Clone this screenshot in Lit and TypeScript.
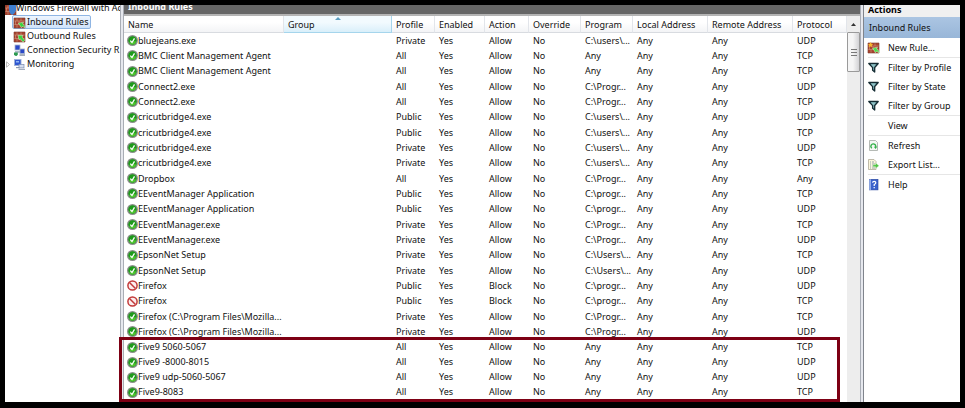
import { LitElement, html, css, svg, nothing } from "lit";
import { customElement, property } from "lit/decorators.js";
import { classMap } from "lit/directives/class-map.js";

const wall = svg`
  <rect x="0" y="1" width="11" height="10" fill="#a8432f"/>
  <path d="M0 4h11M0 7.5h11M3 1v3M7 1v3M1.500 4v3.500M5 4v3.500M3 7.500v3.500M7 7.500v3.500" stroke="#d09a80" stroke-width=".6" fill="none"/>
  <path d="M0 1h11v10H0z" fill="none" stroke="#7c3a2c" stroke-width=".6"/>`;

const funnel = svg`
  <path d="M.8 1.500h9.400L6.700 5.500v4.500L4.600 8.300V5.500z" fill="#7fb3b8" stroke="#152c33" stroke-width="1.300" stroke-linejoin="round"/>
  <path d="M3 2.500h4.500L5.300 5.300z" fill="#8fc3c7"/>`;

const icons = {
  allow: svg`
    <circle cx="5.500" cy="5.500" r="5.500" fill="#8b8f8b"/>
    <circle cx="5.500" cy="5.500" r="4.200" fill="#1d9a1a"/>
    <path d="M2 7.200A4 4 0 0 0 9.400 6.500Q6 5.500 2 7.200z" fill="#4cc42e"/>
    <path d="M3.300 5.600L5 7.500L7.500 3.300" stroke="#fff" stroke-width="1.300" fill="none"/>`,
  block: svg`
    <circle cx="5.500" cy="5.500" r="4.600" fill="#fbeeee" stroke="#c23a3a" stroke-width="1.500"/>
    <path d="M2.500 2.500l6 6" stroke="#c23a3a" stroke-width="1.500"/>`,
  firewall: svg`${wall}<path d="M4 1h7v5q-1 4-4 5q-3-2-3-5z" fill="#3f7fd0"/>`,
  inbound: svg`${wall}<path d="M10.600 11L8.800 9.200L7.600 10.600L4.300 6.200L9.500 5.200L8.600 7L10.800 9z" fill="#38d43c" stroke="#d9f7d3" stroke-width=".5"/>`,
  outbound: svg`${wall}<path d="M4 4.200L9 4.500L8 6L10.800 9.400L9 11L6.300 7.800L5 9z" fill="#38d43c" stroke="#d9f7d3" stroke-width=".5"/>`,
  newRule: svg`${wall}
    <path d="M2.500 0l.8 1.700 1.900.3-1.400 1.300.3 1.900-1.600-.9-1.700.9.300-1.900L0 2l1.800-.3z" fill="#f7b52c"/>
    <path d="M10.800 11L8.800 9.200L7.600 10.600L4.600 6.200L9.500 5.200L8.600 7L10.900 9z" fill="#4be04a" stroke="#d9f7d3" stroke-width=".5"/>`,
  connection: svg`
    <rect x="1" y="0" width="5" height="5" fill="#2a49c8" stroke="#a9b5cc" stroke-width=".8"/>
    <path d="M1 6.200h5v1.500H1z" fill="#9aa6b8"/>
    <rect x="6" y="4" width="4.600" height="4.600" fill="#2a49c8" stroke="#a9b5cc" stroke-width=".8"/>
    <path d="M5.500 9.300h5.500v1.500H5.500z" fill="#8a96a8"/>
    <path d="M0 7.500h3.800v2Q3 11 2 11Q.5 10.500 0 9.500z" fill="#2c9b50"/>`,
  monitor: svg`
    <rect x=".5" y=".5" width="6.500" height="6" fill="#2f57d0" stroke="#9db0d8" stroke-width=".9"/>
    <path d="M2 2h3v1.500H2z" fill="#8fb4f4"/>
    <path d="M2 8h4v1.200H2z" fill="#8d98ad"/>
    <rect x="5" y="5.500" width="5" height="3.400" fill="#d5def0" stroke="#7c8cae" stroke-width=".7"/>
    <path d="M4.500 9.800h6.500v1.200H4.500z" fill="#a3adbd"/>`,
  filter: funnel,
  refresh: svg`
    <path d="M1.500.5h6l2 2v8h-8z" fill="#f4f8f4" stroke="#a3aaa3" stroke-width=".8"/>
    <path d="M3.900 8.300A2.400 2.400 0 1 1 7.600 7" stroke="#33b14a" stroke-width="1.300" fill="none"/>
    <path d="M9.300 6.500L7.600 9L5.900 6.700z" fill="#33b14a"/>`,
  exportList: svg`
    <path d="M.5.500h5.500l2 2v8H.5z" fill="#fbf6dc" stroke="#b0ab98" stroke-width=".8"/>
    <path d="M2 3h1M4 3h2M2 5h1M4 5h3M2 7h1M4 7h2M2 9h1M4 9h3" stroke="#7d8fa0" stroke-width=".8"/>
    <path d="M5 5.700h2.700V3.900L11 6.700L7.700 9.500V7.700H5z" fill="#4fc443" stroke="#e4f8dc" stroke-width=".4"/>`,
  help: svg`
    <rect x="1.300" y=".3" width="8.700" height="10.600" fill="#3c63cc" stroke="#25439c" stroke-width=".6"/>
    <path d="M1.300.3h1.500v10.600H1.300z" fill="#a9bff0"/>
    <path d="M4.600 3.800Q4.700 2.300 6.200 2.300T7.800 3.700Q7.800 4.600 6.200 5.600V6.900M6.200 7.900V9.200" stroke="#fff" stroke-width="1.200" fill="none"/>`,
};

type IconName = keyof typeof icons;

@customElement("rule-icon")
class RuleIcon extends LitElement {
  @property() name: IconName = "allow";

  static styles = css`
    :host {
      display: block;
      flex: none;
      width: 11px;
      height: 11px;
    }
    .glyph {
      display: block;
      width: 100%;
      height: 100%;
      overflow: visible;
    }
  `;

  render() {
    return html`<svg class="glyph" viewBox="0 0 11 11" aria-hidden="true">${icons[this.name]}</svg>`;
  }
}

const columns = ["Name", "Group", "Profile", "Enabled", "Action", "Override", "Program", "Local Address", "Remote Address", "Protocol"];

type Rule = [name: string, profile: string, program: string, protocol: string];

const rules: Rule[] = [
  ["bluejeans.exe", "Private", "C:\\users\\...", "UDP"],
  ["BMC Client Management Agent", "All", "Any", "TCP"],
  ["BMC Client Management Agent", "All", "Any", "TCP"],
  ["Connect2.exe", "All", "C:\\Progr...", "UDP"],
  ["Connect2.exe", "All", "C:\\Progr...", "TCP"],
  ["cricutbridge4.exe", "Public", "C:\\users\\...", "UDP"],
  ["cricutbridge4.exe", "Public", "C:\\users\\...", "TCP"],
  ["cricutbridge4.exe", "Private", "C:\\users\\...", "UDP"],
  ["cricutbridge4.exe", "Private", "C:\\users\\...", "TCP"],
  ["Dropbox", "All", "C:\\Progr...", "Any"],
  ["EEventManager Application", "Public", "C:\\progr...", "TCP"],
  ["EEventManager Application", "Public", "C:\\progr...", "UDP"],
  ["EEventManager.exe", "Private", "C:\\Progr...", "TCP"],
  ["EEventManager.exe", "Private", "C:\\Progr...", "UDP"],
  ["EpsonNet Setup", "Private", "C:\\Users\\...", "TCP"],
  ["EpsonNet Setup", "Private", "C:\\Users\\...", "UDP"],
  ["Firefox", "Public", "C:\\progr...", "UDP"],
  ["Firefox", "Public", "C:\\progr...", "TCP"],
  ["Firefox (C:\\Program Files\\Mozilla...", "Private", "C:\\Progr...", "TCP"],
  ["Firefox (C:\\Program Files\\Mozilla...", "Private", "C:\\Progr...", "UDP"],
];

const markedRules: Rule[] = [
  ["Five9 5060-5067", "All", "Any", "TCP"],
  ["Five9 -8000-8015", "All", "Any", "UDP"],
  ["Five9 udp-5060-5067", "All", "Any", "UDP"],
  ["Five9-8083", "All", "Any", "TCP"],
];

const tree: { label: string; icon: IconName; selected?: boolean; expandable?: boolean }[] = [
  { label: "Inbound Rules", icon: "inbound", selected: true },
  { label: "Outbound Rules", icon: "outbound" },
  { label: "Connection Security R", icon: "connection" },
  { label: "Monitoring", icon: "monitor", expandable: true },
];

const actionGroups: { label: string; icon?: IconName }[][] = [
  [{ label: "New Rule...", icon: "newRule" }],
  [
    { label: "Filter by Profile", icon: "filter" },
    { label: "Filter by State", icon: "filter" },
    { label: "Filter by Group", icon: "filter" },
  ],
  [{ label: "View" }],
  [
    { label: "Refresh", icon: "refresh" },
    { label: "Export List...", icon: "exportList" },
  ],
  [{ label: "Help", icon: "help" }],
];

@customElement("app-root")
class AppRoot extends LitElement {
  static styles = css`
    :host {
      display: block;
      font-family: "Noto Sans", "Open Sans", sans-serif;
      font-size: 9px;
      line-height: 14px;
      color: #111;
    }
    * {
      box-sizing: border-box;
    }
    button {
      font: inherit;
      color: inherit;
      background: none;
      border: 0;
      margin: 0;
      padding: 0;
      text-align: left;
      white-space: nowrap;
    }
    .console {
      display: grid;
      grid-template-columns: 115px 4px minmax(0, 1fr) 4px 96px;
      min-height: 100vh;
      border: solid #000;
      border-width: 5px 5px 6px;
      background: #fff;
    }
    .splitter {
      background: #e6e8ee;
      border: solid #a9adb5;
      border-width: 0 1px;
    }
    .splitter.right {
      border-right-color: #80848c;
    }

    .tree {
      overflow: hidden;
    }
    .root {
      display: flex;
      align-items: flex-end;
      height: 10px;
      overflow: hidden;
      white-space: nowrap;
    }
    .branches {
      list-style: none;
      margin: 0;
      padding: 0;
    }
    .branch {
      display: flex;
      align-items: center;
      height: 14px;
    }
    .twisty {
      flex: none;
      width: 7px;
      height: 7px;
    }
    .node {
      display: flex;
      align-items: center;
      gap: 2px;
      height: 14px;
      padding: 0 2px 0 1px;
      border: 1px solid transparent;
      border-radius: 2px;
    }
    .node.selected {
      background: linear-gradient(#eef5fe, #cfe2fa);
      border-color: #8fb5e3;
    }

    .list {
      display: flex;
      flex-direction: column;
      min-width: 0;
    }
    .caption {
      display: flex;
      align-items: flex-end;
      height: 11px;
      margin: 0;
      padding-left: 4px;
      overflow: hidden;
      border-bottom: 2px solid #b4b4b4;
      background: #666;
      color: #fff;
      font-size: 9px;
      font-weight: 700;
    }
    .view {
      flex: 1;
      display: flex;
    }
    .sheet {
      flex: 1;
      display: flex;
      min-width: 0;
      padding-bottom: 1px;
    }
    .rules {
      width: 100%;
      table-layout: fixed;
      border-collapse: separate;
      border-spacing: 0;
    }
    .c1 { width: 108px; }
    .c2 { width: 43px; }
    .c3 { width: 50px; }
    .c4 { width: 44px; }
    .c5, .c6 { width: 52px; }
    .c7 { width: 75px; }
    .c8 { width: 85px; }
    .c9 { width: 54px; }
    th {
      height: 17px;
      padding: 2px 0 0 4px;
      font-weight: 400;
      text-align: left;
      background: linear-gradient(#fff 40%, #f3f4f6);
      border-right: 1px solid #e2e5ea;
      border-bottom: 1px solid #d8dbe0;
    }
    .sorted {
      position: relative;
      background: linear-gradient(#f2fafe 40%, #d9effa);
      border-color: #a5d5ec;
    }
    .arrow {
      position: absolute;
      top: 1px;
      left: calc(50% - 3px);
      width: 6px;
      height: 3px;
    }
    td {
      padding: 0 0 0 4px;
      height: 15px;
      white-space: nowrap;
      overflow: hidden;
    }
    .name {
      padding-left: 3px;
    }
    .label {
      display: flex;
      align-items: center;
    }
    .marked {
      position: relative;
    }
    .marked::after {
      content: "";
      position: absolute;
      inset: -3px 7px -1px -5px;
      border: 3px solid #7d0014;
      pointer-events: none;
    }
    .scroll {
      flex: none;
      width: 13px;
      background: #ededed;
    }
    .up {
      display: flex;
      align-items: center;
      justify-content: center;
      width: 100%;
      height: 16px;
    }
    .up svg {
      width: 5px;
      height: 3px;
    }
    .thumb {
      display: flex;
      align-items: center;
      justify-content: center;
      height: 40px;
      border: 1px solid #9a9a9a;
      border-radius: 1px;
      background: linear-gradient(90deg, #f5f5f5 45%, #d2d2d5);
    }
    .thumb svg {
      width: 6px;
      height: 7px;
    }

    .title {
      display: flex;
      align-items: flex-end;
      height: 12px;
      margin: 0;
      padding-left: 4px;
      overflow: hidden;
      background: #f0f0f0;
      color: #000;
      font-size: 9px;
      font-weight: 700;
      line-height: 14px;
    }
    .section {
      margin: 0;
      padding-left: 5px;
      background: linear-gradient(#abc5e2, #98b6d8);
      font-size: 9px;
      font-weight: 400;
      line-height: 21px;
    }
    .group + .group {
      margin-left: 4px;
      border-top: 1px solid #e6e6e6;
    }
    .group + .group .action {
      padding-left: 0;
    }
    .action {
      display: flex;
      align-items: center;
      gap: 9px;
      width: 100%;
      height: 19px;
      padding-left: 4px;
    }
    .blank {
      flex: none;
      width: 11px;
    }
  `;

  private row([name, profile, program, protocol]: Rule) {
    const blocked = name === "Firefox";
    return html`<tr>
      <td class="name">
        <span class="label"><rule-icon name=${blocked ? "block" : "allow"}></rule-icon>${name}</span>
      </td>
      <td></td>
      <td>${profile}</td>
      <td>Yes</td>
      <td>${blocked ? "Block" : "Allow"}</td>
      <td>No</td>
      <td>${program}</td>
      <td>Any</td>
      <td>Any</td>
      <td>${protocol}</td>
    </tr>`;
  }

  render() {
    return html`<main class="console">
      <nav class="tree">
        <div class="root"><rule-icon name="firewall"></rule-icon>Windows Firewall with Ac</div>
        <ul class="branches">
          ${tree.map(
            (n) => html`<li class="branch">
              <svg class="twisty" viewBox="0 0 7 7" aria-hidden="true">
                ${n.expandable ? svg`<path d="M1.500.8v5.400L4.500 3.500z" fill="#fff" stroke="#a8a8a8" stroke-width=".8"/>` : nothing}
              </svg>
              <button class=${classMap({ node: true, selected: !!n.selected })}>
                <rule-icon name=${n.icon}></rule-icon>${n.label}
              </button>
            </li>`,
          )}
        </ul>
      </nav>
      <div class="splitter"></div>
      <section class="list">
        <h2 class="caption">Inbound Rules</h2>
        <div class="view">
          <div class="sheet">
            <table class="rules">
              <thead>
                <tr>
                  ${columns.map(
                    (c, i) => html`<th class=${classMap({ [`c${i}`]: true, sorted: c === "Group" })}>
                      <button>${c}</button>
                      ${c === "Group"
                        ? html`<svg class="arrow" viewBox="0 0 6 3" aria-hidden="true"><path d="M0 3L3 0l3 3z" fill="#5a9dc0" /></svg>`
                        : nothing}
                    </th>`,
                  )}
                </tr>
              </thead>
              <tbody>
                ${rules.map((r) => this.row(r))}
              </tbody>
              <tbody class="marked">
                ${markedRules.map((r) => this.row(r))}
              </tbody>
            </table>
          </div>
          <div class="scroll">
            <button class="up" aria-label="Scroll up">
              <svg viewBox="0 0 5 3" aria-hidden="true"><path d="M0 3L2.500 0L5 3z" fill="#333" /></svg>
            </button>
            <div class="thumb">
              <svg viewBox="0 0 6 7" aria-hidden="true"><path d="M0 .5h6M0 3.500h6M0 6.500h6" stroke="#777" /></svg>
            </div>
          </div>
        </div>
      </section>
      <div class="splitter right"></div>
      <aside>
        <h2 class="title">Actions</h2>
        <h3 class="section">Inbound Rules</h3>
        ${actionGroups.map(
          (g) => html`<div class="group">
            ${g.map(
              (a) => html`<button class="action">
                ${a.icon ? html`<rule-icon name=${a.icon}></rule-icon>` : html`<span class="blank"></span>`}${a.label}
              </button>`,
            )}
          </div>`,
        )}
      </aside>
    </main>`;
  }
}
